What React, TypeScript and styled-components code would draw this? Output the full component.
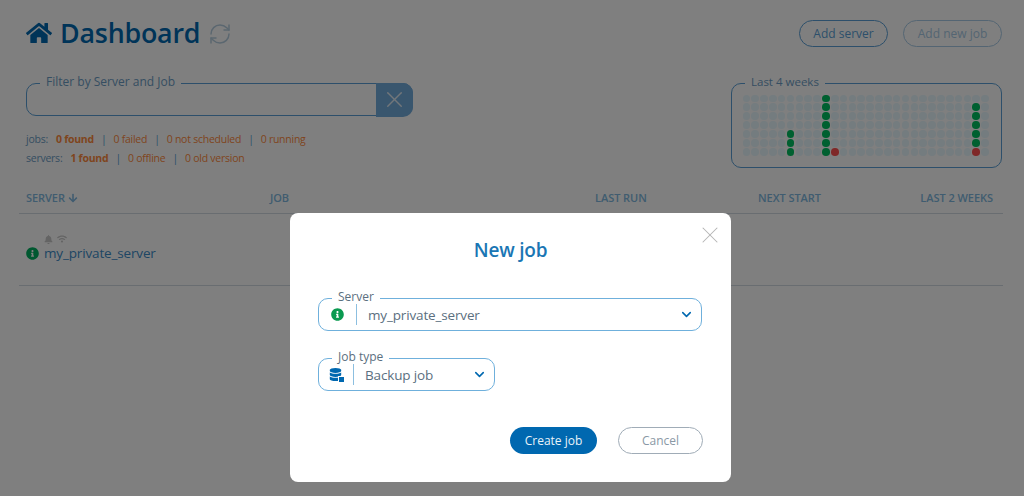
import React from "react";
import styled, { createGlobalStyle } from "styled-components";
import { FaHome, FaArrowDown, FaBell, FaWifi, FaInfoCircle, FaDatabase } from "react-icons/fa";
import { RefreshCw, X, ChevronDown } from "lucide-react";

const Global = createGlobalStyle`
  html, body { margin: 0; padding: 0; background: #fff; }
  body { font-family: "Open Sans", "Noto Sans", sans-serif; width: 1024px; height: 496px; overflow: hidden; }
  * { box-sizing: border-box; }
`;
const Page = styled.div`
  width: 1024px; height: 496px; padding: 20px 21px 0 19px; position: relative; overflow: hidden; background: #fff;
`;
const TopRow = styled.div`
  display: flex; justify-content: space-between; align-items: flex-start; padding: 0 1px 0 7px; height: 63px;
`;
const TitleWrap = styled.div`
  display: flex; align-items: center; gap: 8px; height: 25px; color: #0068b0;
`;
const Title = styled.h1`
  margin: 0; font-size: 26.8px; line-height: 25px; font-weight: 600; color: #0068b0; letter-spacing: -0.2px;
`;
const Spin = styled.span`
  display: flex; color: #b7cfe0; margin-top: 2px;
`;
const TopActions = styled.div`
  display: flex; gap: 15px;
`;
const Pill = styled.button<{ $w: number; $dim?: boolean }>`
  width: ${p => p.$w}px; height: 27px; border-radius: 14px; background: #fff; padding: 0;
  border: 1.5px solid ${p => (p.$dim ? "#a8cbe6" : "#5a9fd6")};
  color: ${p => (p.$dim ? "#a8cbe6" : "#5a9fd6")};
  font: 400 12px "Open Sans", sans-serif;
`;
const FilterRow = styled.div`
  display: flex; justify-content: space-between; align-items: flex-start; padding: 0 1px 0 7px; height: 101px;
`;
const FilterCol = styled.div`
  width: 387px; display: flex; flex-direction: column;
`;
const FilterBox = styled.div`
  height: 33px; border: 1.5px solid #5a9fd6; border-radius: 10px; position: relative; display: flex; justify-content: flex-end;
`;
const Legend = styled.span`
  position: absolute; left: 13px; top: -9px; padding: 0 6px; background: #fff;
  font-size: 12px; line-height: 14px; color: #6b9cc4; font-weight: 400; white-space: nowrap;
`;
const Clear = styled.div`
  width: 37.5px; margin: -1.5px -1px -1.5px 0; background: #72acdc;
  border-radius: 0 10px 10px 0; display: flex; align-items: center; justify-content: center; color: #e4edf4;
`;
const Stats = styled.div`
  margin-top: 14px; display: flex; flex-direction: column;
`;
const StatLine = styled.div`
  display: flex; align-items: center; font-size: 10.5px; line-height: 19px; color: #6b9cc4; letter-spacing: -0.25px;
`;
const Lbl = styled.span`
  margin-right: 8px;
`;
const Stat = styled.span<{ $b?: boolean }>`
  color: #ff8a3c; font-weight: ${p => (p.$b ? 700 : 400)};
`;
const Sep = styled.span`
  margin: 0 7px; color: #5a9fd6;
`;
const WeeksBox = styled.div`
  width: 271px; height: 85px; border: 1.5px solid #5a9fd6; border-radius: 10px; position: relative; padding: 10.5px 0 0 10.5px;
`;
const WeeksLegend = styled(Legend)`
  font-size: 11.5px;
`;
const Dots = styled.div`
  display: grid; grid-template-columns: repeat(28, 8.85px); grid-auto-rows: 8.92px;
`;
const Dot = styled.span<{ $c: string }>`
  width: 7.6px; height: 7.6px; border-radius: 50%; background: ${p => p.$c};
`;
const Head = styled.div`
  display: grid; grid-template-columns: 244px 325px 163px 150px 1fr; padding: 0 10px 0 7px; height: 30px;
  border-bottom: 1px solid #d2dbe2; font-size: 11px; font-weight: 600; color: #80b8e0; line-height: 28px; letter-spacing: -0.05px;
`;
const HeadCell = styled.div<{ $r?: boolean }>`
  display: flex; align-items: center; gap: 3px; height: 28px; justify-content: ${p => (p.$r ? "flex-end" : "flex-start")};
`;
const Row = styled.div`
  height: 72px; border-bottom: 1px solid #d2dbe2; padding: 20px 0 0 7px;
`;
const Tiny = styled.div`
  display: flex; gap: 4px; padding-left: 18px; height: 10px; align-items: center; color: #c8c8c8;
`;
const ServerLine = styled.div`
  display: flex; align-items: center; gap: 5px; font-size: 13.5px; line-height: 19px; color: #3d8cc8; letter-spacing: -0.15px;
`;
const GreenInfo = styled.span`
  display: flex; color: #00b060;
`;
const Overlay = styled.div`
  position: absolute; inset: 0; background: rgba(0, 0, 0, 0.5);
`;
const Modal = styled.div`
  position: absolute; left: 290px; top: 213px; width: 441px; height: 269px; background: #fff; border-radius: 8px;
  padding: 23px 28px 0 28px; display: flex; flex-direction: column;
`;
const Close = styled.div`
  position: absolute; right: 7px; top: 8px; display: flex; color: #b4b4b4;
`;
const ModalTitle = styled.h2`
  margin: 0; text-align: center; font-size: 19px; line-height: 28px; font-weight: 600; color: #1a76b4; letter-spacing: -0.2px;
`;
const SelBox = styled.div<{ $w: number }>`
  padding: 0 7px 0 0; width: ${p => p.$w}px; height: 33px; border: 1.5px solid #6fb0dc; border-radius: 10px;
  display: flex; align-items: center; position: relative;
`;
const SelLegend = styled(Legend)`
  color: #5b6f80;
`;
const SelIcon = styled.span<{ $w: number }>`
  width: ${p => p.$w}px; display: flex; justify-content: center; height: 21px; align-items: center;
  border-right: 1.5px solid #8cbfe0; color: #0a9a50;
`;
const DbIcon = styled(SelIcon)`
  color: #0068b0;
`;
const SelText = styled.span`
  flex: 1; padding-left: 11px; font-size: 13.5px; color: #5b6f80; letter-spacing: -0.15px;
`;
const Chev = styled.span`
  display: flex; color: #0068b0;
`;
const Fields = styled.div`
  display: flex; flex-direction: column; gap: 27px; margin-top: 34px;
`;
const Footer = styled.div`
  display: flex; justify-content: flex-end; gap: 21px; margin-top: 36px;
`;
const Primary = styled.button`
  width: 87px; height: 27px; border: 0; border-radius: 14px; background: #0068b0; color: #eaf3f9; padding: 0;
  font: 400 12px "Open Sans", sans-serif;
`;
const Secondary = styled.button`
  width: 85px; height: 27px; border: 1.5px solid #a0acb7; border-radius: 14px; background: #fff; color: #8a98a5; padding: 0;
  font: 400 12px "Open Sans", sans-serif;
`;
const Small = styled.span`
  display: inline-flex; position: relative; width: 14px; height: 15px; align-items: center;
`;
const Corner = styled.span`
  position: absolute; right: -1px; bottom: 0; width: 5px; height: 5px; background: #0068b0; box-shadow: 0 0 0 1px #fff;
`;

const active: Record<string, string> = {
  "5-4": "g", "5-5": "g", "5-6": "g",
  "9-0": "g", "9-1": "g", "9-2": "g", "9-3": "g", "9-4": "g", "9-5": "g", "9-6": "g",
  "10-6": "r",
  "26-1": "g", "26-2": "g", "26-3": "g", "26-4": "g", "26-5": "g", "26-6": "r",
};
const dotCells = Array.from({ length: 7 * 28 }, (_, i) => {
  const row = Math.floor(i / 28);
  const col = i % 28;
  const a = active[`${col}-${row}`];
  return a === "g" ? "#00c060" : a === "r" ? "#ff5050" : "#e8f8ff";
});

export default function App() {
  return (
    <Page>
      <Global />
      <TopRow>
        <TitleWrap>
          <FaHome size={26} />
          <Title>Dashboard</Title>
          <Spin><RefreshCw size={24} strokeWidth={1.5} /></Spin>
        </TitleWrap>
        <TopActions>
          <Pill $w={89}>Add server</Pill>
          <Pill $w={99} $dim>Add new job</Pill>
        </TopActions>
      </TopRow>
      <FilterRow>
        <FilterCol>
          <FilterBox>
            <Legend>Filter by Server and Job</Legend>
            <Clear><X size={27} strokeWidth={1.3} /></Clear>
          </FilterBox>
          <Stats>
            <StatLine>
              <Lbl>jobs:</Lbl><Stat $b>0 found</Stat><Sep>|</Sep><Stat>0 failed</Stat><Sep>|</Sep>
              <Stat>0 not scheduled</Stat><Sep>|</Sep><Stat>0 running</Stat>
            </StatLine>
            <StatLine>
              <Lbl>servers:</Lbl><Stat $b>1 found</Stat><Sep>|</Sep><Stat>0 offline</Stat><Sep>|</Sep><Stat>0 old version</Stat>
            </StatLine>
          </Stats>
        </FilterCol>
        <WeeksBox>
          <WeeksLegend>Last 4 weeks</WeeksLegend>
          <Dots>
            {dotCells.map((c, i) => <Dot key={i} $c={c} />)}
          </Dots>
        </WeeksBox>
      </FilterRow>
      <Head>
        <HeadCell>SERVER <FaArrowDown size={10} /></HeadCell>
        <HeadCell>JOB</HeadCell>
        <HeadCell>LAST RUN</HeadCell>
        <HeadCell>NEXT START</HeadCell>
        <HeadCell $r>LAST 2 WEEKS</HeadCell>
      </Head>
      <Row>
        <Tiny><FaBell size={9} /><FaWifi size={10} /></Tiny>
        <ServerLine><GreenInfo><FaInfoCircle size={13} /></GreenInfo>my_private_server</ServerLine>
      </Row>
      <Overlay />
      <Modal>
        <Close><X size={28} strokeWidth={0.9} /></Close>
        <ModalTitle>New job</ModalTitle>
        <Fields>
          <SelBox $w={384}>
            <SelLegend>Server</SelLegend>
            <SelIcon $w={38}><FaInfoCircle size={13} /></SelIcon>
            <SelText>my_private_server</SelText>
            <Chev><ChevronDown size={15} strokeWidth={2.5} /></Chev>
          </SelBox>
          <SelBox $w={177}>
            <SelLegend>Job type</SelLegend>
            <DbIcon $w={35}>
              <Small><FaDatabase size={13} /><Corner /></Small>
            </DbIcon>
            <SelText>Backup job</SelText>
            <Chev><ChevronDown size={15} strokeWidth={2.5} /></Chev>
          </SelBox>
        </Fields>
        <Footer>
          <Primary>Create job</Primary>
          <Secondary>Cancel</Secondary>
        </Footer>
      </Modal>
    </Page>
  );
}
